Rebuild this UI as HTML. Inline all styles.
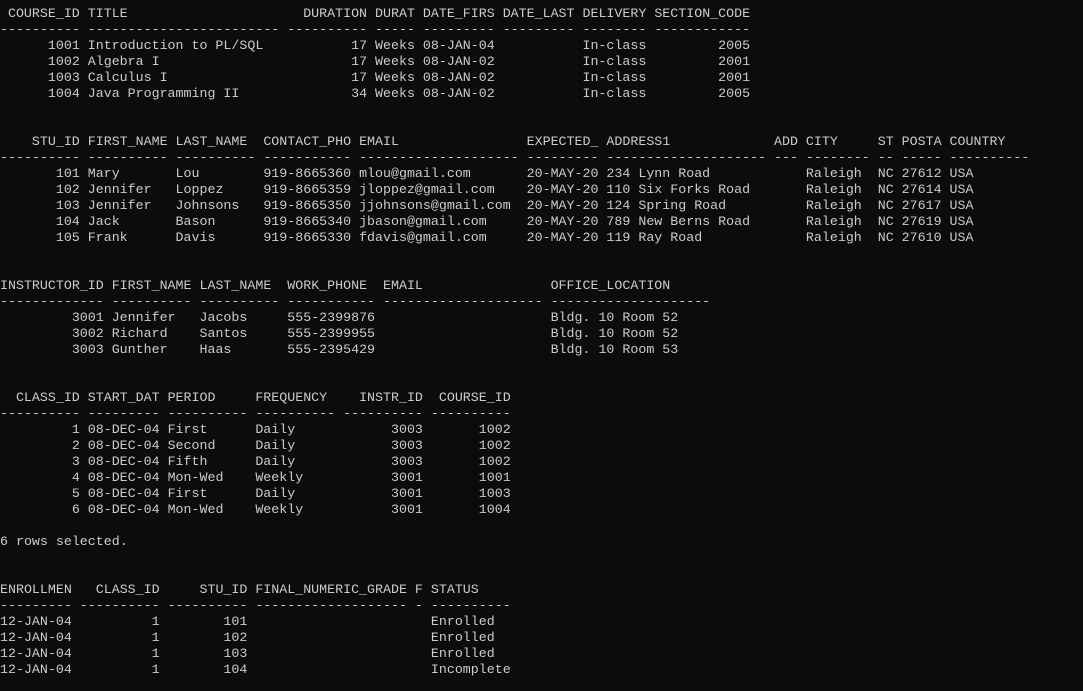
<!DOCTYPE html>
<html><head><meta charset="utf-8"><style>
html,body{margin:0;padding:0;background:#0c0c0c;width:1083px;height:691px;overflow:hidden}
#t{position:absolute;left:0;top:6px;font-family:"Liberation Mono",monospace;font-size:13.3px;color:#cccccc}
.l{position:relative;height:16px;line-height:16px}
.l i{position:absolute;top:0;font-style:normal;white-space:pre}
</style></head><body><div id="t"><div class="l"><i style="left:1ch">COURSE_ID</i><i style="left:11ch">TITLE</i><i style="left:38ch">DURATION</i><i style="left:47ch">DURAT</i><i style="left:53ch">DATE_FIRS</i><i style="left:63ch">DATE_LAST</i><i style="left:73ch">DELIVERY</i><i style="left:82ch">SECTION_CODE</i></div><div class="l"><i style="left:0ch">----------</i><i style="left:11ch">------------------------</i><i style="left:36ch">----------</i><i style="left:47ch">-----</i><i style="left:53ch">---------</i><i style="left:63ch">---------</i><i style="left:73ch">--------</i><i style="left:82ch">------------</i></div><div class="l"><i style="left:6ch">1001</i><i style="left:11ch">Introduction to PL/SQL</i><i style="left:44ch">17</i><i style="left:47ch">Weeks</i><i style="left:53ch">08-JAN-04</i><i style="left:73ch">In-class</i><i style="left:90ch">2005</i></div><div class="l"><i style="left:6ch">1002</i><i style="left:11ch">Algebra I</i><i style="left:44ch">17</i><i style="left:47ch">Weeks</i><i style="left:53ch">08-JAN-02</i><i style="left:73ch">In-class</i><i style="left:90ch">2001</i></div><div class="l"><i style="left:6ch">1003</i><i style="left:11ch">Calculus I</i><i style="left:44ch">17</i><i style="left:47ch">Weeks</i><i style="left:53ch">08-JAN-02</i><i style="left:73ch">In-class</i><i style="left:90ch">2001</i></div><div class="l"><i style="left:6ch">1004</i><i style="left:11ch">Java Programming II</i><i style="left:44ch">34</i><i style="left:47ch">Weeks</i><i style="left:53ch">08-JAN-02</i><i style="left:73ch">In-class</i><i style="left:90ch">2005</i></div><div class="l"></div><div class="l"></div><div class="l"><i style="left:4ch">STU_ID</i><i style="left:11ch">FIRST_NAME</i><i style="left:22ch">LAST_NAME</i><i style="left:33ch">CONTACT_PHO</i><i style="left:45ch">EMAIL</i><i style="left:66ch">EXPECTED_</i><i style="left:76ch">ADDRESS1</i><i style="left:97ch">ADD</i><i style="left:101ch">CITY</i><i style="left:110ch">ST</i><i style="left:113ch">POSTA</i><i style="left:119ch">COUNTRY</i></div><div class="l"><i style="left:0ch">----------</i><i style="left:11ch">----------</i><i style="left:22ch">----------</i><i style="left:33ch">-----------</i><i style="left:45ch">--------------------</i><i style="left:66ch">---------</i><i style="left:76ch">--------------------</i><i style="left:97ch">---</i><i style="left:101ch">--------</i><i style="left:110ch">--</i><i style="left:113ch">-----</i><i style="left:119ch">----------</i></div><div class="l"><i style="left:7ch">101</i><i style="left:11ch">Mary</i><i style="left:22ch">Lou</i><i style="left:33ch">919-8665360</i><i style="left:45ch">mlou@gmail.com</i><i style="left:66ch">20-MAY-20</i><i style="left:76ch">234 Lynn Road</i><i style="left:101ch">Raleigh</i><i style="left:110ch">NC</i><i style="left:113ch">27612</i><i style="left:119ch">USA</i></div><div class="l"><i style="left:7ch">102</i><i style="left:11ch">Jennifer</i><i style="left:22ch">Loppez</i><i style="left:33ch">919-8665359</i><i style="left:45ch">jloppez@gmail.com</i><i style="left:66ch">20-MAY-20</i><i style="left:76ch">110 Six Forks Road</i><i style="left:101ch">Raleigh</i><i style="left:110ch">NC</i><i style="left:113ch">27614</i><i style="left:119ch">USA</i></div><div class="l"><i style="left:7ch">103</i><i style="left:11ch">Jennifer</i><i style="left:22ch">Johnsons</i><i style="left:33ch">919-8665350</i><i style="left:45ch">jjohnsons@gmail.com</i><i style="left:66ch">20-MAY-20</i><i style="left:76ch">124 Spring Road</i><i style="left:101ch">Raleigh</i><i style="left:110ch">NC</i><i style="left:113ch">27617</i><i style="left:119ch">USA</i></div><div class="l"><i style="left:7ch">104</i><i style="left:11ch">Jack</i><i style="left:22ch">Bason</i><i style="left:33ch">919-8665340</i><i style="left:45ch">jbason@gmail.com</i><i style="left:66ch">20-MAY-20</i><i style="left:76ch">789 New Berns Road</i><i style="left:101ch">Raleigh</i><i style="left:110ch">NC</i><i style="left:113ch">27619</i><i style="left:119ch">USA</i></div><div class="l"><i style="left:7ch">105</i><i style="left:11ch">Frank</i><i style="left:22ch">Davis</i><i style="left:33ch">919-8665330</i><i style="left:45ch">fdavis@gmail.com</i><i style="left:66ch">20-MAY-20</i><i style="left:76ch">119 Ray Road</i><i style="left:101ch">Raleigh</i><i style="left:110ch">NC</i><i style="left:113ch">27610</i><i style="left:119ch">USA</i></div><div class="l"></div><div class="l"></div><div class="l"><i style="left:0ch">INSTRUCTOR_ID</i><i style="left:14ch">FIRST_NAME</i><i style="left:25ch">LAST_NAME</i><i style="left:36ch">WORK_PHONE</i><i style="left:48ch">EMAIL</i><i style="left:69ch">OFFICE_LOCATION</i></div><div class="l"><i style="left:0ch">-------------</i><i style="left:14ch">----------</i><i style="left:25ch">----------</i><i style="left:36ch">-----------</i><i style="left:48ch">--------------------</i><i style="left:69ch">--------------------</i></div><div class="l"><i style="left:9ch">3001</i><i style="left:14ch">Jennifer</i><i style="left:25ch">Jacobs</i><i style="left:36ch">555-2399876</i><i style="left:69ch">Bldg. 10 Room 52</i></div><div class="l"><i style="left:9ch">3002</i><i style="left:14ch">Richard</i><i style="left:25ch">Santos</i><i style="left:36ch">555-2399955</i><i style="left:69ch">Bldg. 10 Room 52</i></div><div class="l"><i style="left:9ch">3003</i><i style="left:14ch">Gunther</i><i style="left:25ch">Haas</i><i style="left:36ch">555-2395429</i><i style="left:69ch">Bldg. 10 Room 53</i></div><div class="l"></div><div class="l"></div><div class="l"><i style="left:2ch">CLASS_ID</i><i style="left:11ch">START_DAT</i><i style="left:21ch">PERIOD</i><i style="left:32ch">FREQUENCY</i><i style="left:45ch">INSTR_ID</i><i style="left:55ch">COURSE_ID</i></div><div class="l"><i style="left:0ch">----------</i><i style="left:11ch">---------</i><i style="left:21ch">----------</i><i style="left:32ch">----------</i><i style="left:43ch">----------</i><i style="left:54ch">----------</i></div><div class="l"><i style="left:9ch">1</i><i style="left:11ch">08-DEC-04</i><i style="left:21ch">First</i><i style="left:32ch">Daily</i><i style="left:49ch">3003</i><i style="left:60ch">1002</i></div><div class="l"><i style="left:9ch">2</i><i style="left:11ch">08-DEC-04</i><i style="left:21ch">Second</i><i style="left:32ch">Daily</i><i style="left:49ch">3003</i><i style="left:60ch">1002</i></div><div class="l"><i style="left:9ch">3</i><i style="left:11ch">08-DEC-04</i><i style="left:21ch">Fifth</i><i style="left:32ch">Daily</i><i style="left:49ch">3003</i><i style="left:60ch">1002</i></div><div class="l"><i style="left:9ch">4</i><i style="left:11ch">08-DEC-04</i><i style="left:21ch">Mon-Wed</i><i style="left:32ch">Weekly</i><i style="left:49ch">3001</i><i style="left:60ch">1001</i></div><div class="l"><i style="left:9ch">5</i><i style="left:11ch">08-DEC-04</i><i style="left:21ch">First</i><i style="left:32ch">Daily</i><i style="left:49ch">3001</i><i style="left:60ch">1003</i></div><div class="l"><i style="left:9ch">6</i><i style="left:11ch">08-DEC-04</i><i style="left:21ch">Mon-Wed</i><i style="left:32ch">Weekly</i><i style="left:49ch">3001</i><i style="left:60ch">1004</i></div><div class="l"></div><div class="l"><i style="left:0ch">6 rows selected.</i></div><div class="l"></div><div class="l"></div><div class="l"><i style="left:0ch">ENROLLMEN</i><i style="left:12ch">CLASS_ID</i><i style="left:25ch">STU_ID</i><i style="left:32ch">FINAL_NUMERIC_GRADE</i><i style="left:52ch">F</i><i style="left:54ch">STATUS</i></div><div class="l"><i style="left:0ch">---------</i><i style="left:10ch">----------</i><i style="left:21ch">----------</i><i style="left:32ch">-------------------</i><i style="left:52ch">-</i><i style="left:54ch">----------</i></div><div class="l"><i style="left:0ch">12-JAN-04</i><i style="left:19ch">1</i><i style="left:28ch">101</i><i style="left:54ch">Enrolled</i></div><div class="l"><i style="left:0ch">12-JAN-04</i><i style="left:19ch">1</i><i style="left:28ch">102</i><i style="left:54ch">Enrolled</i></div><div class="l"><i style="left:0ch">12-JAN-04</i><i style="left:19ch">1</i><i style="left:28ch">103</i><i style="left:54ch">Enrolled</i></div><div class="l"><i style="left:0ch">12-JAN-04</i><i style="left:19ch">1</i><i style="left:28ch">104</i><i style="left:54ch">Incomplete</i></div></div></body></html>
